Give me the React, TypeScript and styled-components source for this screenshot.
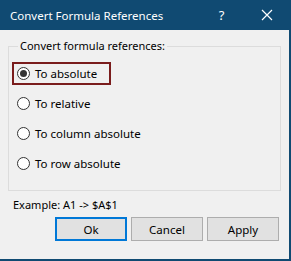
import styled, { createGlobalStyle } from 'styled-components';

const GlobalStyle = createGlobalStyle`
  html, body {
    margin: 0;
    padding: 0;
    background: #f0f0f0;
  }
  body {
    font-family: 'Noto Sans', 'Open Sans', sans-serif;
    font-size: 11px;
    color: #000;
  }
`;

const OPTIONS = ['To absolute', 'To relative', 'To column absolute', 'To row absolute'];

/**
 * Convert Formula References dialog
 */
const App = () => {
  return (
    <>
      <GlobalStyle />
      <Window>
        <TitleBar>
          <TitleText>Convert Formula References</TitleText>
          <TitleButtons>
            <TitleButton>?</TitleButton>
            <TitleButton>
              <svg width="12" height="12" viewBox="0 0 12 12">
                <path d="M1 1 L11 11 M11 1 L1 11" stroke="#fff" strokeWidth="1.2" />
              </svg>
            </TitleButton>
          </TitleButtons>
        </TitleBar>
        <Body>
          <GroupBox>
            <Legend>Convert formula references:</Legend>
            <OptionList>
              {OPTIONS.map((label, i) => (
                <Option key={label} $focused={i === 0}>
                  <Radio $checked={i === 0} />
                  <span>{label}</span>
                </Option>
              ))}
            </OptionList>
          </GroupBox>
          <Example>Example: A1 -&gt; $A$1</Example>
          <ButtonRow>
            <Button $primary>Ok</Button>
            <Button>Cancel</Button>
            <Button>Apply</Button>
          </ButtonRow>
        </Body>
      </Window>
    </>
  );
};

const Window = styled.div`
  width: 291px;
  height: 261px;
  box-sizing: border-box;
  display: flex;
  flex-direction: column;
  background: #f0f0f0;
  border-right: 2px solid #104a72;
  border-bottom: 2px solid #104a72;
`;

const TitleBar = styled.div`
  height: 30px;
  flex-shrink: 0;
  display: flex;
  align-items: center;
  justify-content: space-between;
  background: #104a72;
  color: #fff;
  padding-left: 10px;
`;

const TitleText = styled.div`
  font-size: 11.5px;
`;

const TitleButtons = styled.div`
  display: flex;
  align-items: center;
  height: 100%;
`;

const TitleButton = styled.div`
  width: 45px;
  height: 100%;
  display: flex;
  align-items: center;
  justify-content: center;
  font-size: 13px;
`;

const Body = styled.div`
  flex: 1;
  display: flex;
  flex-direction: column;
  padding: 8px 8px 0 8px;
`;

const GroupBox = styled.fieldset`
  margin: 0;
  padding: 8px 0 0 3px;
  height: 153px;
  box-sizing: border-box;
  border: 1px solid #dcdcdc;
  min-width: 0;
`;

const Legend = styled.legend`
  padding: 0 2px;
  margin-left: 6px;
  font-size: 11px;
  line-height: 16px;
`;

const OptionList = styled.div`
  display: flex;
  flex-direction: column;
  align-items: flex-start;
  gap: 7px;
`;

const Option = styled.div<{ $focused?: boolean }>`
  display: flex;
  align-items: center;
  gap: 5px;
  height: 23px;
  box-sizing: border-box;
  padding: 0 12px 0 3px;
  font-size: 11.5px;
  border: 2px solid ${(p) => (p.$focused ? '#7a1c1c' : 'transparent')};
`;

const Radio = styled.span<{ $checked?: boolean }>`
  width: 13px;
  height: 13px;
  box-sizing: border-box;
  border-radius: 50%;
  border: 1px solid #333;
  background: #fff;
  display: flex;
  align-items: center;
  justify-content: center;

  &::after {
    content: '';
    width: 7px;
    height: 7px;
    border-radius: 50%;
    background: ${(p) => (p.$checked ? '#333' : 'transparent')};
  }
`;

const Example = styled.div`
  margin-top: 6px;
  padding-left: 5px;
  height: 16px;
  line-height: 16px;
`;

const ButtonRow = styled.div`
  display: flex;
  justify-content: flex-end;
  gap: 4px;
  margin-top: 4px;
  padding-right: 2px;
`;

const Button = styled.button<{ $primary?: boolean }>`
  width: 72px;
  height: 24px;
  box-sizing: border-box;
  font-family: inherit;
  font-size: 11.5px;
  color: #000;
  background: #e1e1e1;
  border: ${(p) => (p.$primary ? '2px solid #0078d7' : '1px solid #adadad')};
  padding: 0;
`;

export default App;
